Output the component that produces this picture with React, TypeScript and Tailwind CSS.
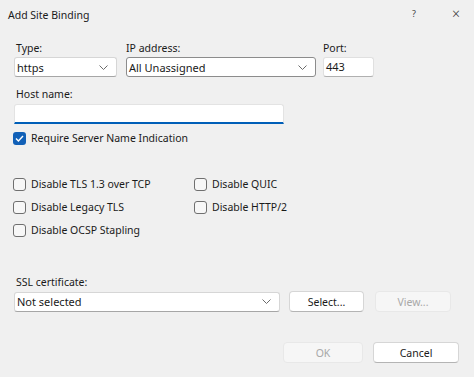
import React from "react"

function Chevron() {
  return (
    <svg width="9" height="5" viewBox="0 0 9 5" className="shrink-0">
      <path d="M0.5 0.5 L4.5 4.5 L8.5 0.5" fill="none" stroke="#6b6b6b" strokeWidth="1" />
    </svg>
  )
}

function Select({ value, className, dark }: { value: string; className: string; dark?: boolean }) {
  return (
    <div
      className={
        "flex h-[20px] items-center justify-between rounded-[3px] border bg-white pl-[2px] pr-[8px] " +
        (dark ? "border-[#8c8c8c] " : "border-[#d6d6d6] border-b-[#a6a6a6] ") +
        className
      }
    >
      <span className="text-[11px] leading-none">{value}</span>
      <Chevron />
    </div>
  )
}

function Check({ label, checked }: { label: string; checked?: boolean }) {
  return (
    <div className="flex h-[16px] items-center">
      {checked ? (
        <div className="flex h-[13px] w-[13px] items-center justify-center rounded-[3px] bg-[#1160b7]">
          <svg width="9" height="7" viewBox="0 0 9 7">
            <path d="M1 3.6 L3.4 6 L8 1" fill="none" stroke="white" strokeWidth="1.4" />
          </svg>
        </div>
      ) : (
        <div className="h-[13px] w-[13px] rounded-[3px] border border-[#6f6f6f] bg-[#f7f7f7]" />
      )}
      <span className="ml-[5px]">{label}</span>
    </div>
  )
}

function Button({ label, className, disabled }: { label: string; className: string; disabled?: boolean }) {
  return (
    <div
      className={
        "flex h-[21px] items-center justify-center rounded-[4px] border " +
        (disabled
          ? "border-[#e8e8e8] bg-[#f6f6f6] text-[#a8a8a8] "
          : "border-[#d6d6d6] border-b-[#b4b4b4] bg-white text-[#1a1a1a] ") +
        className
      }
    >
      {label}
    </div>
  )
}

export default function App() {
  return (
    <div
      className="relative h-[377px] w-[474px] overflow-hidden bg-[#f0f0f0] text-[10.5px] leading-[16px] text-[#1a1a1a]"
      style={{ fontFamily: '"Noto Sans", "Open Sans", sans-serif' }}
    >
      {/* title bar */}
      <div className="flex h-[28px] items-center pl-[8px]">
        <span className="flex-1 pt-[1px] text-[10.5px]">Add Site Binding</span>
        <span className="w-[10px] text-[9px] text-[#444]">?</span>
        <span className="ml-[30px] mr-[14px] text-[14px] font-light text-[#333]">×</span>
      </div>

      <div className="px-[14px]">
        {/* type / ip / port */}
        <div className="mt-[12px] flex">
          <div className="flex w-[103px] flex-col">
            <span className="pl-[2px]">Type:</span>
            <Select value="https" className="mt-[1px] w-[103px]" />
          </div>
          <div className="ml-[9px] flex flex-col">
            <span>IP address:</span>
            <Select value="All Unassigned" className="mt-[1px] w-[190px]" dark />
          </div>
          <div className="ml-[7px] flex flex-col">
            <span>Port:</span>
            <div className="mt-[1px] flex h-[20px] w-[51px] items-center rounded-[3px] border border-[#e0e0e0] border-b-[#b0b0b0] bg-white pl-[2px] text-[11px]">
              443
            </div>
          </div>
        </div>

        {/* host name */}
        <div className="mt-[9px] pl-[2px]">Host name:</div>
        <div className="mt-[2px] h-[20px] w-[270px] rounded-t-[3px] border border-[#e3e3e3] border-b-2 border-b-[#005fb8] bg-white" />

        <div className="mt-[6px] -ml-[1px]">
          <Check label="Require Server Name Indication" checked />
        </div>

        {/* disable options */}
        <div className="mt-[30px] -ml-[1px] grid grid-cols-[181px_1fr] gap-y-[7px]">
          <Check label="Disable TLS 1.3 over TCP" />
          <Check label="Disable QUIC" />
          <Check label="Disable Legacy TLS" />
          <Check label="Disable HTTP/2" />
          <Check label="Disable OCSP Stapling" />
        </div>

        {/* ssl */}
        <div className="mt-[36px] pl-[2px]">SSL certificate:</div>
        <div className="mt-[1px] flex items-center">
          <Select value="Not selected" className="w-[266px]" />
          <Button label="Select..." className="ml-[9px] w-[75px]" />
          <Button label="View..." className="ml-[11px] w-[76px]" disabled />
        </div>

        {/* footer */}
        <div className="mt-[30px] flex justify-end pr-[1px]">
          <Button label="OK" className="w-[80px]" disabled />
          <Button label="Cancel" className="ml-[10px] w-[86px]" />
        </div>
      </div>
    </div>
  )
}
